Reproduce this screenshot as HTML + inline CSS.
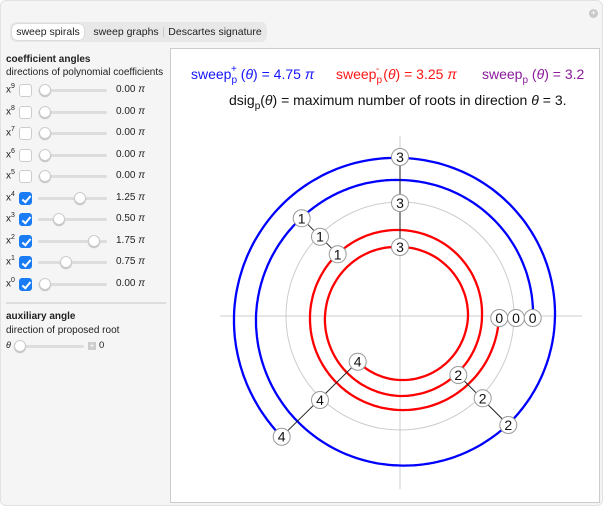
<!DOCTYPE html>
<html><head><meta charset="utf-8"><style>
body{margin:0;width:607px;height:509px;background:#fff;font-family:"Liberation Sans",sans-serif;overflow:hidden;position:relative}
#frame{position:absolute;left:0;top:0;width:603px;height:506px;background:#f5f5f5;border:1px solid #e2e2e2;border-radius:6px;box-sizing:border-box}
.tabs{position:absolute;left:10px;top:22px;width:257px;height:20px;background:#e8e8e8;border-radius:6px;font-size:10.5px;color:#222}
.tab{position:absolute;top:2px;height:16px;line-height:16px;text-align:center;white-space:nowrap}
.tab.a{background:#fff;border-radius:5px;box-shadow:0 0 1px #999}
.lbl{position:absolute;font-size:10px;color:#222;white-space:nowrap}
.b{font-weight:bold}
.row{position:absolute;left:6px;height:16px;font-size:10px;color:#222;white-space:nowrap}
.cb{position:absolute;left:13px;top:1px;width:13px;height:13px;border:1px solid #ccc;border-radius:3px;background:#fff;box-sizing:border-box}
.cb.on{background:#1a7cf5;border-color:#1a7cf5}
.cb.on:after{content:"";position:absolute;left:3.5px;top:0.5px;width:3px;height:7px;border:solid #fff;border-width:0 2px 2px 0;transform:rotate(40deg)}
.tr{position:absolute;left:32px;top:6px;width:69px;height:3px;background:#ddd;border-radius:2px}
.th{position:absolute;top:1px;width:12px;height:12px;border-radius:50%;background:#fff;border:1px solid #ccc;box-sizing:border-box;box-shadow:0 1px 1px #bbb}
.v{position:absolute;left:110px;top:1px;font-size:10px;white-space:nowrap}
sup{font-size:7px}
#plot{position:absolute;left:170px;top:48px;width:430px;height:455px;background:#fff;border:1px solid #ccc;box-sizing:border-box}
</style></head><body>
<div id="frame"></div>
<div style="position:absolute;left:589px;top:9px;width:9px;height:9px;border-radius:50%;background:#c8c8c8;color:#fff;font-size:9px;line-height:9px;text-align:center">+</div>
<div class="tabs">
<div class="tab a" style="left:2px;width:72px">sweep spirals</div>
<div class="tab" style="left:76px;width:80px">sweep graphs</div>
<div style="position:absolute;left:153px;top:5px;width:1px;height:10px;background:#ccc"></div>
<div class="tab" style="left:155px;width:100px">Descartes signature</div>
</div>
<div class="lbl b" style="left:6px;top:54px">coefficient angles</div>
<div class="lbl" style="left:6px;top:67px">directions of polynomial coefficients</div>

<div class="row" style="top:83px">x<sup>9</sup><div class="cb"></div><div class="tr"></div><div class="th" style="left:33px"></div><div class="v">0.00 <i>π</i></div></div>
<div class="row" style="top:105px">x<sup>8</sup><div class="cb"></div><div class="tr"></div><div class="th" style="left:33px"></div><div class="v">0.00 <i>π</i></div></div>
<div class="row" style="top:126px">x<sup>7</sup><div class="cb"></div><div class="tr"></div><div class="th" style="left:33px"></div><div class="v">0.00 <i>π</i></div></div>
<div class="row" style="top:148px">x<sup>6</sup><div class="cb"></div><div class="tr"></div><div class="th" style="left:33px"></div><div class="v">0.00 <i>π</i></div></div>
<div class="row" style="top:169px">x<sup>5</sup><div class="cb"></div><div class="tr"></div><div class="th" style="left:33px"></div><div class="v">0.00 <i>π</i></div></div>
<div class="row" style="top:191px">x<sup>4</sup><div class="cb on"></div><div class="tr"></div><div class="th" style="left:68px"></div><div class="v">1.25 <i>π</i></div></div>
<div class="row" style="top:212px">x<sup>3</sup><div class="cb on"></div><div class="tr"></div><div class="th" style="left:47px"></div><div class="v">0.50 <i>π</i></div></div>
<div class="row" style="top:234px">x<sup>2</sup><div class="cb on"></div><div class="tr"></div><div class="th" style="left:82px"></div><div class="v">1.75 <i>π</i></div></div>
<div class="row" style="top:255px">x<sup>1</sup><div class="cb on"></div><div class="tr"></div><div class="th" style="left:54px"></div><div class="v">0.75 <i>π</i></div></div>
<div class="row" style="top:277px">x<sup>0</sup><div class="cb on"></div><div class="tr"></div><div class="th" style="left:33px"></div><div class="v">0.00 <i>π</i></div></div>

<div style="position:absolute;left:6px;top:302px;width:160px;height:2px;background:#ddd"></div>
<div class="lbl b" style="left:6px;top:311px">auxiliary angle</div>
<div class="lbl" style="left:6px;top:325px">direction of proposed root</div>
<div class="lbl" style="left:6px;top:340px;font-size:9px"><i>θ</i></div>
<div style="position:absolute;left:17px;top:345px;width:67px;height:3px;background:#ddd;border-radius:2px"></div>
<div class="th" style="left:14px;top:340px"></div>
<div style="position:absolute;left:88px;top:342px;width:8px;height:8px;background:#ccc;color:#fff;font-size:8px;line-height:8px;text-align:center">+</div>
<div class="lbl" style="left:99px;top:340px;font-size:9.5px">0</div>

<div id="plot"></div>
<svg style="position:absolute;left:0;top:0" width="607" height="509" font-family="Liberation Sans, sans-serif">
<g font-size="14">
<text x="191" y="79" fill="#1515ff">sweep<tspan font-size="10" dy="4">p</tspan><tspan font-size="10" dx="-6" dy="-11">+</tspan><tspan dy="7"> (<tspan font-style="italic">θ</tspan>) =  4.75 <tspan font-style="italic">π</tspan></tspan></text>
<text x="336" y="79" fill="#ff1515">sweep<tspan font-size="10" dy="4">p</tspan><tspan font-size="10" dx="-6" dy="-11">-</tspan><tspan dy="7"> (<tspan font-style="italic">θ</tspan>) =  3.25 <tspan font-style="italic">π</tspan></tspan></text>
<text x="482" y="79" fill="#8a1a9a">sweep<tspan font-size="10" dy="4">p</tspan><tspan dy="-4"> (<tspan font-style="italic">θ</tspan>) =  3.2</tspan></text>
<text x="229" y="105" fill="#111">dsig<tspan font-size="10" dy="4">p</tspan><tspan dy="-4">(<tspan font-style="italic">θ</tspan>) = maximum number of roots in direction <tspan font-style="italic">θ</tspan> = 3.</tspan></text>
</g>
<rect x="585" y="58" width="13" height="30" fill="#fff"/>
<line x1="220" y1="316" x2="582" y2="316" stroke="#ccc" stroke-width="1"/>
<line x1="400" y1="136" x2="400" y2="489" stroke="#ccc" stroke-width="1"/>
<circle cx="400" cy="316" r="114" fill="none" stroke="#ccc" stroke-width="1"/>
<path id="blue" fill="none" stroke="#0000ff" stroke-width="2.3"/>
<path id="red" fill="none" stroke="#ff0000" stroke-width="2.3"/>
<g stroke="#222" stroke-width="1">
<line x1="400" y1="157" x2="400" y2="247"/>
<line x1="301.7" y1="218.3" x2="337.7" y2="254.3"/>
<line x1="458.3" y1="375" x2="508.3" y2="425"/>
<line x1="357.7" y1="361.7" x2="281.7" y2="436.7"/>
</g>
<g id="labs" font-size="14" text-anchor="middle" fill="#111"></g>
</svg>
<script>
var cx=400,cy=316;
function pts(a,r){var s="";for(var t=0;t<=a.length-1;t+=0.02){var i=Math.floor(t);if(i>=a.length-1)i=a.length-2;var f=t-i;var ang=a[i]+(a[i+1]-a[i])*f,rr=r[i]+(r[i+1]-r[i])*f;var th=ang*Math.PI/180;s+=(s?"L":"M")+(cx+rr*Math.cos(th)).toFixed(1)+","+(cy+rr*Math.sin(th)).toFixed(1);}return s;}
document.getElementById("blue").setAttribute("d",pts([0,-90,-135,-180,-225,-270,-315,-360,-450,-540,-585],[133,136,139,144,147,149.5,153,155,158,166,169]));
document.getElementById("red").setAttribute("d",pts([0,90,180,270,360,450,540,630,720,855],[99,94,90,86,82,80,75,69,68,62]));
var L=[[499.3,318,0],[516,318,0],[532.7,318,0],[400,157,3],[400,203,3],[400,247,3],[301.7,218.3,1],[320,236.7,1],[337.7,254.3,1],[458.3,375,2],[482.7,398.3,2],[508.3,425,2],[357.7,361.7,4],[320,400,4],[281.7,436.7,4]];
var g=document.getElementById("labs"),h="";
L.forEach(function(p){h+='<circle cx="'+p[0]+'" cy="'+p[1]+'" r="8.5" fill="#fff" stroke="#999" stroke-width="1"/><text x="'+p[0]+'" y="'+(p[1]+5)+'">'+p[2]+'</text>';});
g.innerHTML=h;
</script>
</body></html>
